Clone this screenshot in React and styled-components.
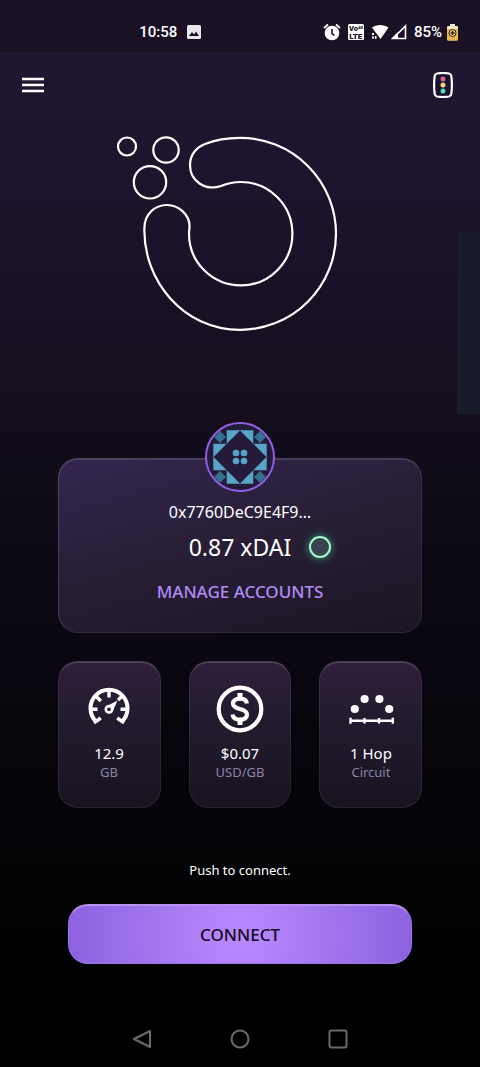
import styled, { createGlobalStyle } from 'styled-components'

const stats = [
  { icon: 'gauge', value: '12.9', unit: 'GB' },
  { icon: 'dollar', value: '$0.07', unit: 'USD/GB' },
  { icon: 'circuit', value: '1 Hop', unit: 'Circuit' },
]

const StatIcon = ({ name }) => {
  if (name === 'gauge') {
    return (
      <svg width="48" height="48" viewBox="0 0 48 48" fill="none" stroke="#fff" strokeWidth="4">
        <path d="M11.5 37 A18.5 18.5 0 1 1 36.5 37" strokeLinejoin="round" />
        <path
          d="M9 37.8 L15.8 33 M39 37.8 L32.2 33 M5 24.3 H12.5 M35.5 24.3 H43 M24 6 V12.5 M11.5 11.8 L15.8 16 M36.5 11.8 L33 15"
          strokeWidth="3.4"
        />
        <path d="M32.5 15.5 L28 25.5 L22.5 20.8 Z" fill="#fff" stroke="none" />
        <circle cx="24" cy="24.3" r="3.2" fill="#251d33" strokeWidth="2.6" />
      </svg>
    )
  }

  if (name === 'dollar') {
    return (
      <svg width="48" height="48" viewBox="0 0 48 48" fill="none" stroke="#fff" strokeWidth="4.2">
        <circle cx="24" cy="24" r="21.3" />
        <path d="M31 18.5 C30.5 15 27.8 13.6 24 13.6 C19.800 13.6 17 15.500 17 18.6 C17 22 20 23 24 24 C28 25 31 26.300 31 29.6 C31 33 28 34.700 24 34.7 C20 34.7 17 33 16.600 29.5" />
        <path d="M24 8 V14 M24 34 V40" strokeWidth="5" />
      </svg>
    )
  }

  return (
    <svg width="48" height="48" viewBox="0 0 48 48" fill="#fff">
      <circle cx="7.8" cy="24" r="4.1" />
      <circle cx="17.6" cy="14" r="4.1" />
      <circle cx="32.4" cy="14" r="4.1" />
      <circle cx="42.2" cy="24" r="4.1" />
      <path
        d="M3.5 35.8 H46 M3.5 32.8 V38.8 M17.5 33 V38.600 M32 33 V38.600 M45.800 32.8 V38.8"
        stroke="#fff"
        strokeWidth="2.4"
      />
    </svg>
  )
}

const StatusIcons = () => (
  <>
    <svg width="18" height="18" viewBox="0 0 18 18">
      <circle cx="9" cy="10" r="7.3" fill="#fff" />
      <path d="M1 5 L5 1.5 M13 1.5 L17 5" stroke="#fff" strokeWidth="1.8" />
      <path d="M9 6 V10.5 L11.5 12.5" stroke="#1a1224" strokeWidth="1.6" fill="none" />
    </svg>
    <svg width="16" height="16" viewBox="0 0 16 16">
      <rect width="16" height="16" rx="1.5" fill="#fff" />
      <g fill="#1a1224" fontFamily="Roboto, sans-serif" fontWeight="900">
        <text x="1" y="7.3" fontSize="7.5">Vo</text>
        <text x="10" y="5" fontSize="4">4G</text>
        <text x="1.2" y="14.600" fontSize="8">LTE</text>
      </g>
    </svg>
    <svg width="36" height="17" viewBox="0 0 36 17" fill="#fff">
      <path d="M1 3.5 C5.5 0 13 0 17.5 3.5 L9.5 15 Z" />
      <path d="M1 9 h2 v2 h-2z M1 12.5 h2 v2 h-2z M4 12 h1.5 v3 h-1.5z" />
      <path d="M34.5 2 V14.5 H22 Z" fill="none" stroke="#fff" strokeWidth="1.6" />
      <path d="M20 15 L27 8 V15 Z" />
    </svg>
  </>
)

const Battery = () => (
  <svg width="11" height="17" viewBox="0 0 11 17">
    <path
      d="M3 0 h5 v2 h2 a1 1 0 0 1 1 1 v12 a1.5 1.5 0 0 1 -1.5 1.5 h-8 a1.5 1.5 0 0 1 -1.5 -1.5 v-12 a1 1 0 0 1 1 -1 h2z"
      fill="#f4ead2"
    />
    <path d="M0 5 h11 v10 a1.5 1.5 0 0 1 -1.5 1.5 h-8 a1.5 1.5 0 0 1 -1.5 -1.5z" fill="#e9b64c" />
    <circle cx="5.5" cy="9" r="3.5" fill="#f6d58b" stroke="#32240f" />
    <path d="M5.5 7 v4 M3.5 9 h4" stroke="#32240f" strokeWidth="1.5" />
  </svg>
)

const Logo = () => (
  <svg width="224" height="200" viewBox="0 0 224 200" fill="none" stroke="#fff" strokeWidth="2.2">
    <circle cx="11" cy="12.5" r="9" />
    <circle cx="50" cy="16" r="12.7" />
    <circle cx="34" cy="48.3" r="16.2" />
    <path d="M124 3.8 A96 96 0 0 1 124 195.8 C67 195.8 27 146 28.4 94 C28.400 80 39 71 51 71 C63 71 73.500 81 73.500 92 C73.500 95 73 97 73 99.8 A51.700 51.700 0 1 0 124.5 48 C116 48 110 50 105 52 C90 57 74 48 74 31 C74 20 81 13 89 10 C100 5.5 112 3.8 124 3.8 Z" />
  </svg>
)

const Identicon = () => (
  <svg width="66" height="66" viewBox="3 3 66 66">
    <path d="M22.7 9.3 H49.3 V62.7 H22.7 Z M9.3 22.7 H62.7 V49.3 H9.3 Z" fill="#57a5c7" />
    <path d="M36 9.5 L62.5 36 L36 62.5 L9.5 36 Z" fill="#251a3a" />
    <g fill="#34718f">
      <path d="M16 10 l6 6 l-6 6 l-6 -6z M56 10 l6 6 l-6 6 l-6 -6z M16 50 l6 6 l-6 6 l-6 -6z M56 50 l6 6 l-6 6 l-6 -6z" />
    </g>
    <g fill="#57a5c7">
      <circle cx="32" cy="32" r="3.3" />
      <circle cx="40" cy="32" r="3.3" />
      <circle cx="32" cy="40" r="3.3" />
      <circle cx="40" cy="40" r="3.3" />
    </g>
  </svg>
)

const App = () => (
  <Screen>
    <GlobalStyle />
    <StatusBar>
      <Group $gap={10}>
        <span>10:58</span>
        <svg width="14" height="14" viewBox="0 0 14 14">
          <rect width="14" height="14" rx="1.5" fill="#e9e6ee" />
          <path d="M2 11 L5 7 L7 9.5 L9 6.5 L12 11 Z" fill="#1a1224" />
        </svg>
      </Group>
      <Group $gap={7}>
        <StatusIcons />
        <Group $gap={5}>
          <span>85%</span>
          <Battery />
        </Group>
      </Group>
    </StatusBar>

    <Toolbar>
      <IconButton aria-label="Menu">
        <svg width="22" height="16" viewBox="0 0 22 16" fill="#fff">
          <path d="M0 0.7 h22 v2.6 h-22z M0 6.7 h22 v2.6 h-22z M0 12.7 h22 v2.6 h-22z" />
        </svg>
      </IconButton>
      <IconButton aria-label="Connection status">
        <svg width="20" height="26" viewBox="0 0 20 26">
          <path
            d="M4 1.5 Q10 0.5 16 1.5 Q18 2 18.3 4 Q19.5 13 18.3 22 Q18 24 16 24.5 Q10 25.5 4 24.5 Q2 24 1.7 22 Q0.5 13 1.7 4 Q2 2 4 1.5 Z"
            fill="#1b1130"
            stroke="#fff"
            strokeWidth="2.2"
          />
          <circle cx="10" cy="7" r="2.5" fill="#d9638f" />
          <circle cx="10" cy="13" r="2.5" fill="#f7d27a" />
          <circle cx="10" cy="19" r="2.5" fill="#4fe0a8" />
        </svg>
      </IconButton>
    </Toolbar>
    <EdgeHandle />

    <Hero>
      <Logo />
    </Hero>

    <Main>
      <AccountCard>
        <Avatar>
          <Identicon />
        </Avatar>
        <Address>0x7760DeC9E4F9…</Address>
        <Balance>
          <span />
          0.87 xDAI
          <StatusRing />
        </Balance>
        <ManageButton>MANAGE ACCOUNTS</ManageButton>
      </AccountCard>

      <Stats>
        {stats.map(({ icon, value, unit }) => (
          <Stat key={unit}>
            <StatIcon name={icon} />
            <Value>{value}</Value>
            <Unit>{unit}</Unit>
          </Stat>
        ))}
      </Stats>
    </Main>

    <Footer>
      <Hint>Push to connect.</Hint>
      <ConnectButton>CONNECT</ConnectButton>
    </Footer>

    <SystemNav>
      <IconButton aria-label="Back">
        <svg width="20" height="20" viewBox="0 0 20 20" fill="none" stroke="#6b6b6b" strokeWidth="2">
          <path d="M18 2 V18 L2 10 Z" strokeLinejoin="round" />
        </svg>
      </IconButton>
      <IconButton aria-label="Home">
        <svg width="20" height="20" viewBox="0 0 20 20" fill="none" stroke="#6b6b6b" strokeWidth="2">
          <circle cx="10" cy="10" r="8.5" />
        </svg>
      </IconButton>
      <IconButton aria-label="Recent apps">
        <svg width="20" height="20" viewBox="0 0 20 20" fill="none" stroke="#6b6b6b" strokeWidth="2">
          <rect x="1.5" y="1.5" width="17" height="17" rx="2" />
        </svg>
      </IconButton>
    </SystemNav>
  </Screen>
)

const GlobalStyle = createGlobalStyle`
  * {
    box-sizing: border-box;
  }

  body {
    background: #000;
    margin: 0;
  }
`

const Screen = styled.div`
  background: linear-gradient(
    #211732 52px,
    #1b1128 25%,
    #170e1f 36%,
    #100c18 45%,
    #0a0710 62%,
    #040306 80%,
    #000 92%
  );
  color: #fff;
  display: flex;
  flex-direction: column;
  font-family: 'Noto Sans', sans-serif;
  min-height: 100vh;
  position: relative;
`

const Group = styled.div`
  align-items: center;
  display: flex;
  gap: ${({ $gap }) => $gap}px;
`

const StatusBar = styled.div`
  align-items: center;
  background: #1a1224;
  display: flex;
  font: 500 15px/20px Roboto, sans-serif;
  justify-content: space-between;
  padding: 22px 22px 10px 29%;
`

const Toolbar = styled.header`
  align-items: center;
  display: flex;
  height: 66px;
  justify-content: space-between;
  padding: 0 21px 0 16px;
`

const IconButton = styled.button`
  background: transparent;
  border: none;
  display: flex;
  padding: 6px;
`

const EdgeHandle = styled.div`
  background: #181c2b;
  height: 182px;
  position: absolute;
  right: 0;
  top: 232px;
  width: 23px;
`

const Hero = styled.div`
  padding: 16px 0 124px calc(50% - 124px);

  svg {
    display: block;
  }
`

const Main = styled.main`
  display: grid;
  gap: 28px;
  padding: 0 12%;
`

const AccountCard = styled.section`
  align-items: center;
  background: linear-gradient(165deg, #342650, #271e35 50%, #1b1624) border-box;
  border: 1px solid #ffffff14;
  border-left-color: #ffffff24;
  border-radius: 20px;
  border-top: 2px solid #ffffff20;
  display: flex;
  flex-direction: column;
  padding-bottom: 28px;
`

const Avatar = styled.div`
  background: #251a3a;
  border: 2px solid #8f60e0;
  border-radius: 50%;
  display: flex;
  margin-top: -38px;
  overflow: hidden;
`

const Address = styled.div`
  font-size: 16px;
  line-height: 24px;
  margin-top: 8px;
`

const Balance = styled.div`
  align-items: center;
  display: grid;
  font-size: 23px;
  gap: 18px;
  grid-template-columns: 22px auto 22px;
  line-height: 30px;
  margin-top: 8px;
`

const StatusRing = styled.span`
  background: #39434f;
  border: 2px solid #a4f5d0;
  border-radius: 50%;
  box-shadow: 0 0 8px #3f9c74;
  height: 22px;
  width: 22px;
`

const ManageButton = styled.button`
  background: transparent;
  border: none;
  color: #b18cf5;
  font: 500 17px/24px 'Noto Sans', sans-serif;
  margin-top: 18px;
  padding: 0;
`

const Stats = styled.div`
  display: grid;
  gap: 28px;
  grid-template-columns: repeat(3, 1fr);
`

const Stat = styled.div`
  align-items: center;
  background: linear-gradient(#2f1f3c, #231c30 35%, #18131f) border-box;
  border: 1px solid #ffffff12;
  border-radius: 20px;
  border-top: 2px solid #ffffff24;
  display: flex;
  flex-direction: column;
  padding: 22px 0 26px;
`

const Value = styled.div`
  font-size: 15px;
  line-height: 20px;
  margin-top: 10px;
`

const Unit = styled.div`
  color: #8f83a8;
  font-size: 13px;
  line-height: 18px;
`

const Footer = styled.footer`
  padding: 52px 68px 0;
  text-align: center;
`

const Hint = styled.p`
  font-size: 13px;
  line-height: 20px;
  margin: 0 0 24px;
`

const ConnectButton = styled.button`
  background: radial-gradient(circle at center, #b98aff, #a678f0 45%, #8c62e0);
  border: 1px solid #9a73ea;
  border-radius: 20px;
  border-top: 2px solid #b794f2;
  color: #140a22;
  font: 500 17px/24px 'Noto Sans', sans-serif;
  height: 60px;
  width: 100%;
`

const SystemNav = styled.nav`
  display: flex;
  gap: 66px;
  justify-content: center;
  margin-top: auto;
  padding-bottom: 12px;
`

export default App
